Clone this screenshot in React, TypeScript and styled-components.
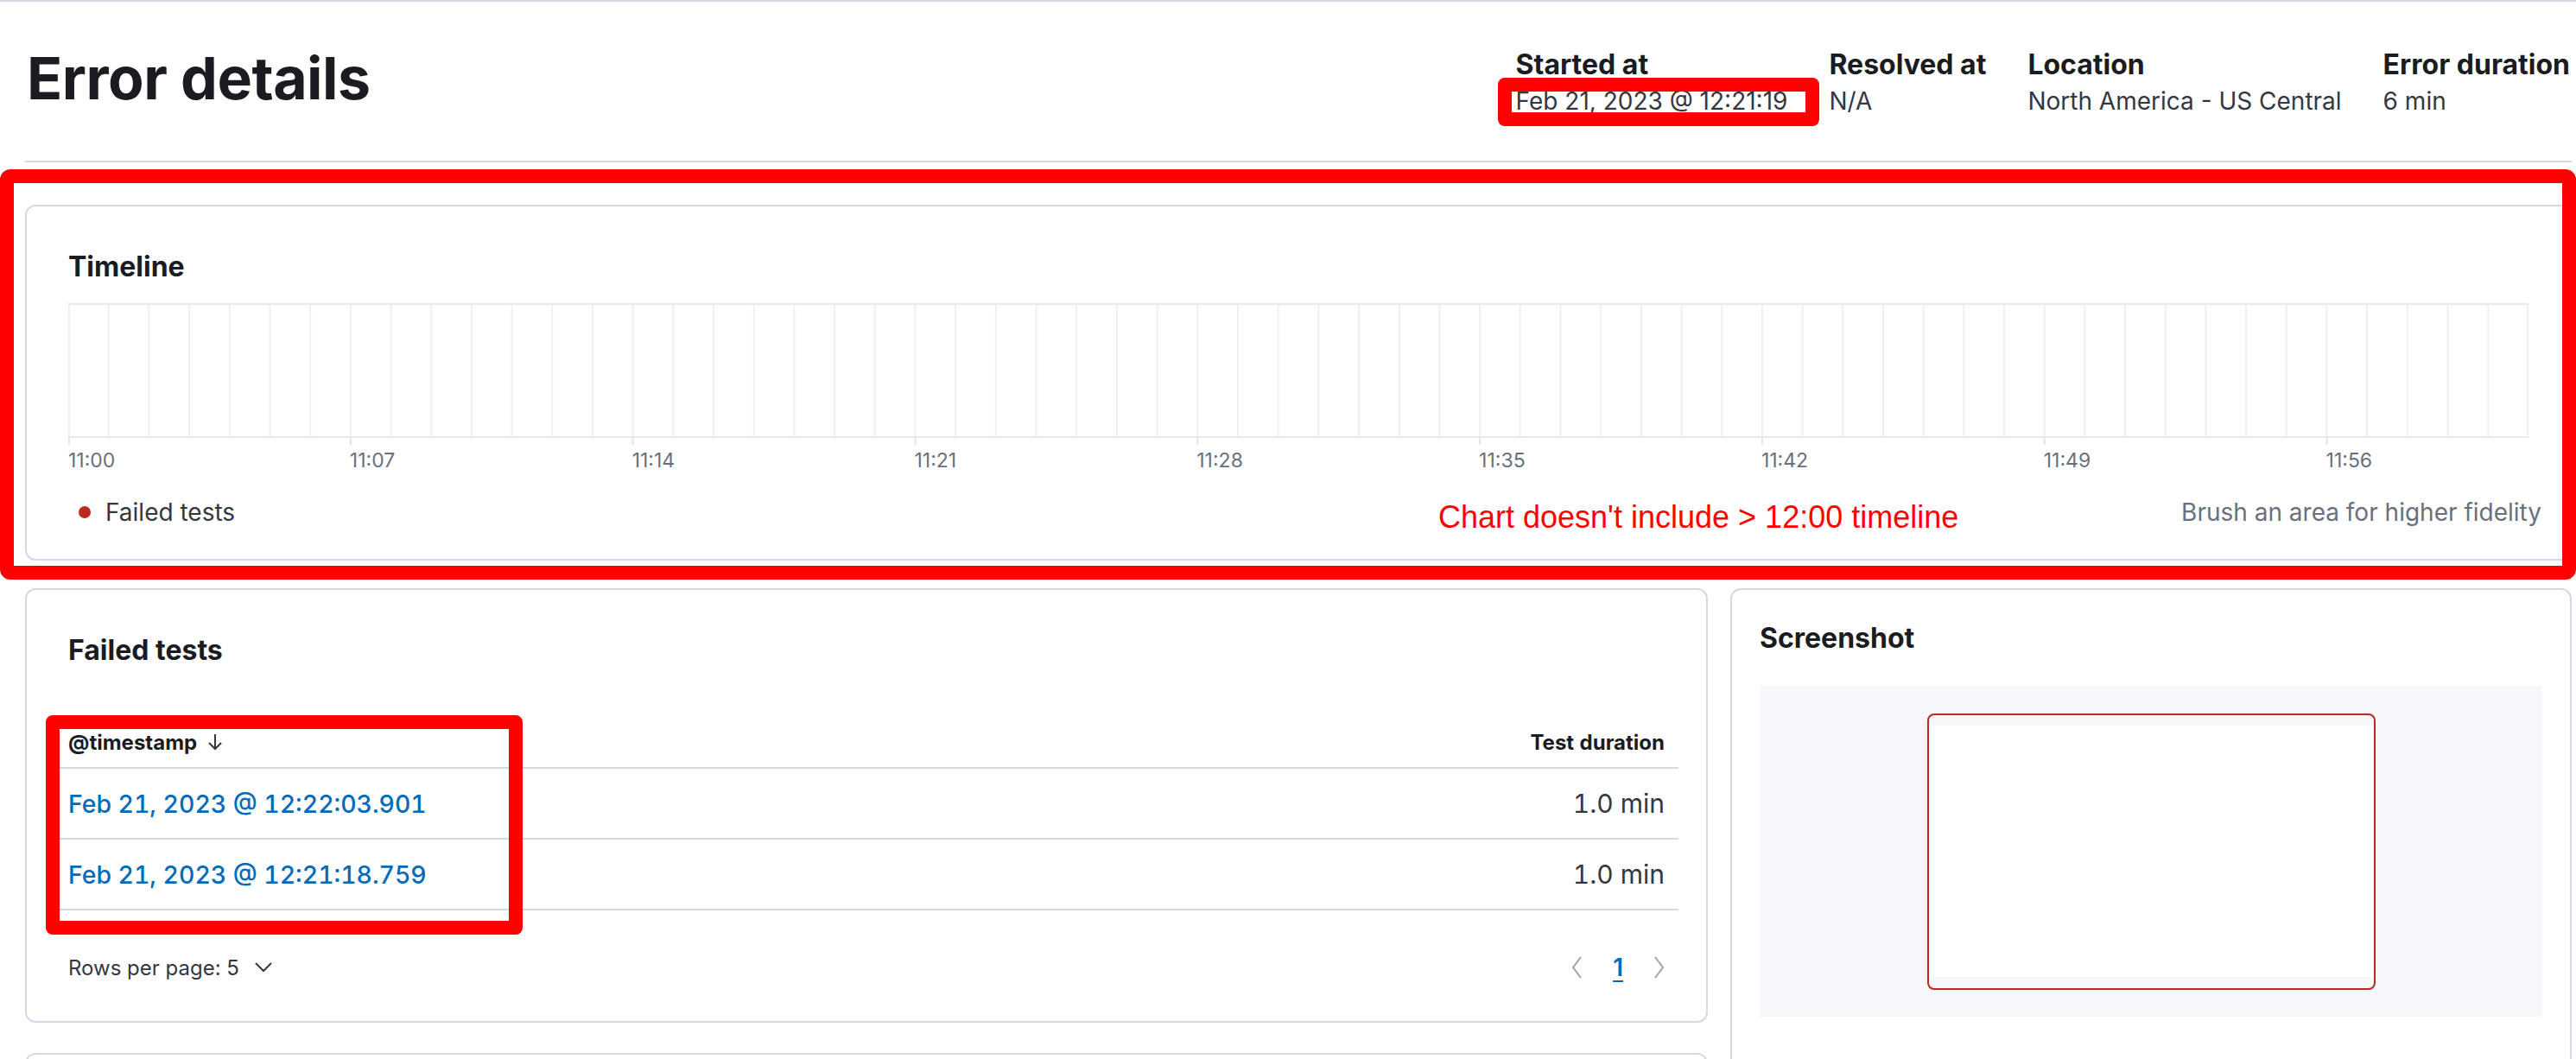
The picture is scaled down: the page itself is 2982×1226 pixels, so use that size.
import styled, { createGlobalStyle } from 'styled-components';

// global
const GlobalStyle = createGlobalStyle`
  *, *::before, *::after { box-sizing: border-box; }
  html, body {
    margin: 0;
    padding: 0;
    overflow: hidden;
    background: #ffffff;
    font-family: Inter, "Noto Sans", sans-serif;
    color: #343741;
  }
`;

// data
const GRID_STEPS = 61;
const CHART_W = 2848;
const LABELS = ['11:00', '11:07', '11:14', '11:21', '11:28', '11:35', '11:42', '11:49', '11:56'];

const meta = [
  { title: 'Started at', value: 'Feb 21, 2023 @ 12:21:19', marked: true },
  { title: 'Resolved at', value: 'N/A' },
  { title: 'Location', value: 'North America - US Central' },
  { title: 'Error duration', value: '6 min' },
];

const failedTests = [
  { id: 1, timestamp: 'Feb 21, 2023 @ 12:22:03.901', duration: '1.0 min' },
  { id: 2, timestamp: 'Feb 21, 2023 @ 12:21:18.759', duration: '1.0 min' },
];

// CSS
const Page = styled.div`
  border-top: 2px solid #d3dae6;
  padding: 0 5px 0 29px;
`;

const Header = styled.header`
  height: 186px;
  display: flex;
  justify-content: space-between;
  align-items: flex-start;
  padding: 48px 2px 0 2px;
  border-bottom: 2px solid #d3dae6;
`;

const PageTitle = styled.h1`
  margin: 0;
  font-size: 68px;
  line-height: 80px;
  font-weight: 700;
  letter-spacing: -0.5px;
  color: #1a1c21;
`;

const MetaList = styled.div`
  display: flex;
  gap: 48px;
  margin-top: 5px;
`;

const MetaItem = styled.div`
  display: flex;
  flex-direction: column;
`;

const MetaTitle = styled.div`
  font-size: 32px;
  line-height: 40px;
  font-weight: 700;
  color: #1a1c21;
  white-space: nowrap;
`;

const MetaValue = styled.div<{ $marked?: boolean }>`
  position: relative;
  margin-top: 2px;
  font-size: 28px;
  line-height: 40px;
  color: #343741;
  white-space: nowrap;

  ${({ $marked }) => $marked && `
    &::after {
      content: '';
      position: absolute;
      left: -21px;
      right: -37px;
      top: -7px;
      height: 56px;
      border: 16px solid #ff0000;
      border-radius: 8px;
      pointer-events: none;
    }
  `}
`;

const TimelineSection = styled.section`
  position: relative;
  margin-top: 49px;
`;

const Card = styled.div`
  position: relative;
  background: #ffffff;
  border: 2px solid #d3dae6;
  border-radius: 12px;
`;

const TimelineCard = styled(Card)`
  padding: 50px 48px 34px 48px;
`;

const CardTitle = styled.h2<{ $indent?: number }>`
  margin: 0;
  padding-left: ${({ $indent }) => $indent || 0}px;
  font-size: 32px;
  line-height: 40px;
  font-weight: 700;
  color: #1a1c21;
`;

const ChartBox = styled.div`
  margin-top: 22px;
  height: 200px;

  svg {
    display: block;
  }
`;

const LegendRow = styled.div`
  margin-top: 22px;
  margin-right: -15px;
  height: 40px;
  display: flex;
  align-items: center;
  justify-content: space-between;
`;

const LegendItem = styled.div`
  display: flex;
  align-items: center;
  gap: 17px;
  padding-left: 12px;
  font-size: 28px;
  color: #343741;
`;

const LegendDot = styled.span`
  width: 14px;
  height: 14px;
  border-radius: 50%;
  background: #bd271e;
`;

const BrushHint = styled.div`
  font-size: 28px;
  color: #69707d;
`;

const AnnotationBox = styled.div<{ $radius?: number }>`
  position: absolute;
  border: 16px solid #ff0000;
  border-radius: ${({ $radius }) => $radius || 8}px;
  pointer-events: none;
`;

const TimelineMark = styled(AnnotationBox)`
  left: -29px;
  right: -5px;
  top: -41px;
  bottom: -22px;
`;

const AnnotationText = styled.div`
  position: absolute;
  left: 1636px;
  top: 344px;
  font-family: "Liberation Sans", Arial, sans-serif;
  font-size: 36px;
  line-height: 36px;
  color: #ff0000;
  white-space: nowrap;
`;

const BottomGrid = styled.div`
  margin-top: 32px;
  display: grid;
  grid-template-columns: 2fr 1fr;
  gap: 26px;
  align-items: start;
`;

const LeftColumn = styled.div`
  display: flex;
  flex-direction: column;
  gap: 35px;
`;

const FailedCard = styled(Card)`
  padding: 50px 32px 30px 32px;
`;

const NextCard = styled(Card)`
  height: 200px;
`;

const TableMark = styled(AnnotationBox)`
  left: 22px;
  top: 145px;
  width: 552px;
  height: 254px;
`;

const Table = styled.div`
  margin-top: 57px;
  font-feature-settings: "tnum" 1;
`;

const TableRow = styled.div<{ $head?: boolean }>`
  height: ${({ $head }) => ($head ? 60 : 82)}px;
  display: flex;
  align-items: center;
  justify-content: space-between;
  padding: 0 16px;
  border-bottom: 2px solid #d3dae6;
  font-size: ${({ $head }) => ($head ? 24 : 30)}px;
  font-weight: ${({ $head }) => ($head ? 700 : 400)};
  color: ${({ $head }) => ($head ? '#1a1c21' : '#343741')};
`;

const HeadCell = styled.div`
  display: flex;
  align-items: center;
  gap: 12px;
`;

const LinkCell = styled.a`
  font-size: 28.4px;
  color: #006bb8;
  font-weight: 500;
  text-decoration: none;
  cursor: pointer;
`;

const TableFooter = styled.div`
  margin-top: 34px;
  height: 64px;
  display: flex;
  align-items: center;
  justify-content: space-between;
  padding: 0 16px;
`;

const RowsPerPage = styled.button`
  display: flex;
  align-items: center;
  gap: 18px;
  padding: 0;
  border: none;
  background: none;
  font-family: inherit;
  font-size: 24px;
  color: #343741;
  cursor: pointer;
`;

const Pagination = styled.div`
  display: flex;
  align-items: center;
  gap: 36px;
`;

const PageNumber = styled.span`
  font-size: 28px;
  font-weight: 600;
  color: #006bb8;
  text-decoration: underline;
  text-decoration-thickness: 2px;
  text-underline-offset: 5px;
`;

const ScreenshotCard = styled(Card)`
  padding: 36px 32px;
  min-height: 700px;
`;

const ScreenshotArea = styled.div`
  margin-top: 35px;
  height: 383px;
  background: #f5f7fa;
  display: flex;
  align-items: center;
  justify-content: center;
`;

const ScreenshotFrame = styled.div`
  width: 519px;
  height: 320px;
  border: 2px solid #bd271e;
  border-radius: 8px;
  background: #f5f7fa;
  padding: 12px 0 13px;
  overflow: hidden;
`;

const ScreenshotImage = styled.div`
  width: 100%;
  height: 100%;
  background: #ffffff;
`;

// icons
const SortDownIcon = () => (
  <svg width="18" height="20" viewBox="0 0 18 20" fill="none" stroke="#343741" strokeWidth="2">
    <path d="M9 1v17M2 11l7 7 7-7" />
  </svg>
);

const ChevronDown = () => (
  <svg width="20" height="12" viewBox="0 0 20 12" fill="none" stroke="#343741" strokeWidth="2">
    <path d="M1 1l9 9 9-9" />
  </svg>
);

const ChevronSide = ({ dir }: { dir: 'left' | 'right' }) => (
  <svg width="12" height="26" viewBox="0 0 12 26" fill="none" stroke="#98a2b3" strokeWidth="2">
    <path d={dir === 'left' ? 'M11 1L2 13l9 12' : 'M1 1l9 12-9 12'} />
  </svg>
);

const TimelineChart = () => {
  const step = CHART_W / GRID_STEPS;
  const lines = Array.from({ length: GRID_STEPS + 1 }, (_, i) => i);

  return (
    <svg width={CHART_W} height="200" viewBox={`0 0 ${CHART_W} 200`}>
      {lines.map((i) => {
        const x = Math.min(Math.max(i * step, 1), CHART_W - 1);
        return <line key={i} x1={x} y1={2} x2={x} y2={154} stroke="#eef0f4" strokeWidth="2" />;
      })}
      <line x1={0} y1={1} x2={CHART_W} y2={1} stroke="#e6e9ef" strokeWidth="2" />
      <line x1={0} y1={155} x2={CHART_W} y2={155} stroke="#e6e9ef" strokeWidth="2" />
      {LABELS.map((label, n) => {
        const x = Math.max(n * 7 * step, 1);
        return (
          <g key={label}>
            <line x1={x} y1={156} x2={x} y2={164} stroke="#dfe3ea" strokeWidth="2" />
            <text x={x - 1} y={190} fontFamily="Inter, sans-serif" fontSize="23" fill="#69707d">
              {label}
            </text>
          </g>
        );
      })}
    </svg>
  );
};

const App = () => {
  return (
    <>
      <GlobalStyle />
      <Page>
        <Header>
          <PageTitle>Error details</PageTitle>
          <MetaList>
            {meta.map((item) => (
              <MetaItem key={item.title}>
                <MetaTitle>{item.title}</MetaTitle>
                <MetaValue $marked={item.marked}>{item.value}</MetaValue>
              </MetaItem>
            ))}
          </MetaList>
        </Header>

        <TimelineSection>
          <TimelineCard>
            <CardTitle>Timeline</CardTitle>
            <ChartBox>
              <TimelineChart />
            </ChartBox>
            <LegendRow>
              <LegendItem>
                <LegendDot />
                Failed tests
              </LegendItem>
              <BrushHint>Brush an area for higher fidelity</BrushHint>
            </LegendRow>
          </TimelineCard>
          <TimelineMark $radius={12} />
          <AnnotationText>{"Chart doesn't include > 12:00 timeline"}</AnnotationText>
        </TimelineSection>

        <BottomGrid>
          <LeftColumn>
            <FailedCard>
              <CardTitle $indent={16}>Failed tests</CardTitle>
              <Table>
                <TableRow $head>
                  <HeadCell>
                    @timestamp
                    <SortDownIcon />
                  </HeadCell>
                  <div>Test duration</div>
                </TableRow>
                {failedTests.map((test) => (
                  <TableRow key={test.id}>
                    <LinkCell>{test.timestamp}</LinkCell>
                    <div>{test.duration}</div>
                  </TableRow>
                ))}
              </Table>
              <TableFooter>
                <RowsPerPage>
                  Rows per page: 5
                  <ChevronDown />
                </RowsPerPage>
                <Pagination>
                  <ChevronSide dir="left" />
                  <PageNumber>1</PageNumber>
                  <ChevronSide dir="right" />
                </Pagination>
              </TableFooter>
              <TableMark />
            </FailedCard>
            <NextCard />
          </LeftColumn>

          <ScreenshotCard>
            <CardTitle>Screenshot</CardTitle>
            <ScreenshotArea>
              <ScreenshotFrame>
                <ScreenshotImage />
              </ScreenshotFrame>
            </ScreenshotArea>
          </ScreenshotCard>
        </BottomGrid>
      </Page>
    </>
  );
};

export default App;
